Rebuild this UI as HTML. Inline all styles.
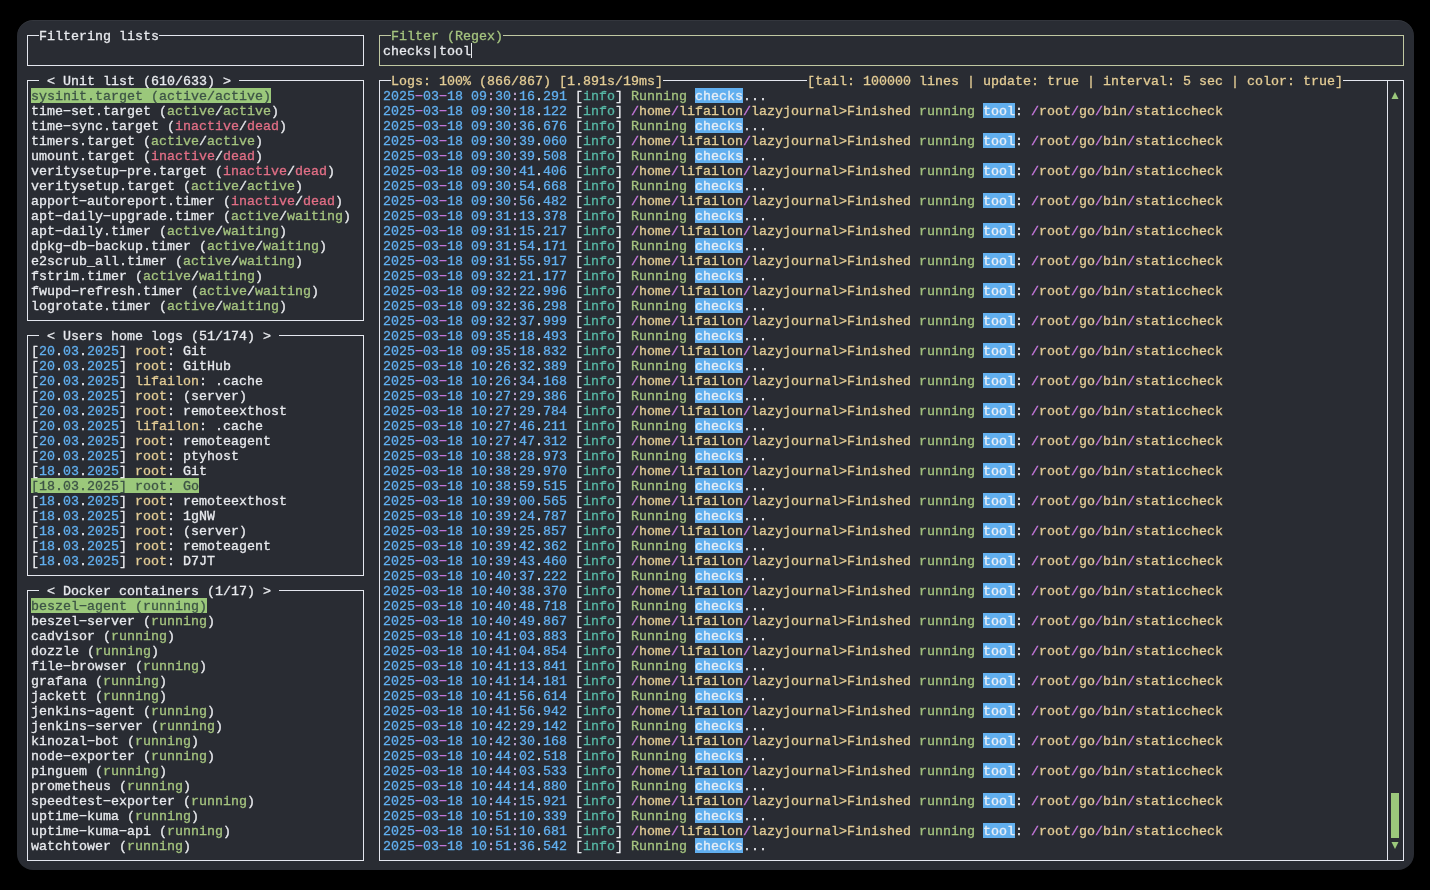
<!DOCTYPE html>
<html><head><meta charset="utf-8"><style>
html,body{margin:0;padding:0;background:#000000;width:1430px;height:890px;overflow:hidden}
.win{position:absolute;left:17px;top:20px;width:1397px;height:850px;border-radius:16px;background:#292c33;box-shadow:inset 0 1px 0 rgba(255,255,255,0.05)}
.l{position:absolute}
.fg{position:absolute;left:0;top:0;width:1430px;height:890px;will-change:transform}
.t{position:absolute;white-space:pre;font-family:"Liberation Mono",monospace;font-size:13.3333px;line-height:15px;height:15px;font-weight:normal;-webkit-text-stroke:0.3px currentColor}
</style></head><body>
<div class="win"></div>
<div class="l" style="left:27px;top:35px;width:337px;height:1px;background:#e4e7ef"></div>
<div class="l" style="left:27px;top:65px;width:337px;height:1px;background:#e4e7ef"></div>
<div class="l" style="left:27px;top:35px;width:1px;height:31px;background:#e4e7ef"></div>
<div class="l" style="left:363px;top:35px;width:1px;height:31px;background:#e4e7ef"></div>
<div class="l" style="left:39px;top:28px;width:120px;height:15px;background:#292c33"></div>
<div class="l" style="left:27px;top:80px;width:337px;height:1px;background:#e4e7ef"></div>
<div class="l" style="left:27px;top:320px;width:337px;height:1px;background:#e4e7ef"></div>
<div class="l" style="left:27px;top:80px;width:1px;height:241px;background:#e4e7ef"></div>
<div class="l" style="left:363px;top:80px;width:1px;height:241px;background:#e4e7ef"></div>
<div class="l" style="left:39px;top:73px;width:200px;height:15px;background:#292c33"></div>
<div class="l" style="left:31px;top:88px;width:240px;height:15px;background:#9bc87b"></div>
<div class="l" style="left:27px;top:335px;width:337px;height:1px;background:#e4e7ef"></div>
<div class="l" style="left:27px;top:575px;width:337px;height:1px;background:#e4e7ef"></div>
<div class="l" style="left:27px;top:335px;width:1px;height:241px;background:#e4e7ef"></div>
<div class="l" style="left:363px;top:335px;width:1px;height:241px;background:#e4e7ef"></div>
<div class="l" style="left:39px;top:328px;width:240px;height:15px;background:#292c33"></div>
<div class="l" style="left:31px;top:478px;width:168px;height:15px;background:#9bc87b"></div>
<div class="l" style="left:27px;top:590px;width:337px;height:1px;background:#e4e7ef"></div>
<div class="l" style="left:27px;top:860px;width:337px;height:1px;background:#e4e7ef"></div>
<div class="l" style="left:27px;top:590px;width:1px;height:271px;background:#e4e7ef"></div>
<div class="l" style="left:363px;top:590px;width:1px;height:271px;background:#e4e7ef"></div>
<div class="l" style="left:39px;top:583px;width:240px;height:15px;background:#292c33"></div>
<div class="l" style="left:31px;top:598px;width:176px;height:15px;background:#9bc87b"></div>
<div class="l" style="left:379px;top:35px;width:1025px;height:1px;background:#c0c8a2"></div>
<div class="l" style="left:379px;top:65px;width:1025px;height:1px;background:#c0c8a2"></div>
<div class="l" style="left:379px;top:35px;width:1px;height:31px;background:#c0c8a2"></div>
<div class="l" style="left:1403px;top:35px;width:1px;height:31px;background:#c0c8a2"></div>
<div class="l" style="left:391px;top:28px;width:112px;height:15px;background:#292c33"></div>
<div class="l" style="left:471px;top:43px;width:1px;height:15px;background:#e8eaee"></div>
<div class="l" style="left:379px;top:80px;width:1025px;height:1px;background:#e4e7ef"></div>
<div class="l" style="left:379px;top:860px;width:1025px;height:1px;background:#e4e7ef"></div>
<div class="l" style="left:379px;top:80px;width:1px;height:781px;background:#e4e7ef"></div>
<div class="l" style="left:1403px;top:80px;width:1px;height:781px;background:#e4e7ef"></div>
<div class="l" style="left:1387px;top:80px;width:1px;height:781px;background:#e4e7ef"></div>
<div class="l" style="left:391px;top:73px;width:272px;height:15px;background:#292c33"></div>
<div class="l" style="left:807px;top:73px;width:536px;height:15px;background:#292c33"></div>
<div class="l" style="left:695px;top:88px;width:48px;height:15px;background:#61afef"></div>
<div class="l" style="left:983px;top:103px;width:32px;height:15px;background:#61afef"></div>
<div class="l" style="left:695px;top:118px;width:48px;height:15px;background:#61afef"></div>
<div class="l" style="left:983px;top:133px;width:32px;height:15px;background:#61afef"></div>
<div class="l" style="left:695px;top:148px;width:48px;height:15px;background:#61afef"></div>
<div class="l" style="left:983px;top:163px;width:32px;height:15px;background:#61afef"></div>
<div class="l" style="left:695px;top:178px;width:48px;height:15px;background:#61afef"></div>
<div class="l" style="left:983px;top:193px;width:32px;height:15px;background:#61afef"></div>
<div class="l" style="left:695px;top:208px;width:48px;height:15px;background:#61afef"></div>
<div class="l" style="left:983px;top:223px;width:32px;height:15px;background:#61afef"></div>
<div class="l" style="left:695px;top:238px;width:48px;height:15px;background:#61afef"></div>
<div class="l" style="left:983px;top:253px;width:32px;height:15px;background:#61afef"></div>
<div class="l" style="left:695px;top:268px;width:48px;height:15px;background:#61afef"></div>
<div class="l" style="left:983px;top:283px;width:32px;height:15px;background:#61afef"></div>
<div class="l" style="left:695px;top:298px;width:48px;height:15px;background:#61afef"></div>
<div class="l" style="left:983px;top:313px;width:32px;height:15px;background:#61afef"></div>
<div class="l" style="left:695px;top:328px;width:48px;height:15px;background:#61afef"></div>
<div class="l" style="left:983px;top:343px;width:32px;height:15px;background:#61afef"></div>
<div class="l" style="left:695px;top:358px;width:48px;height:15px;background:#61afef"></div>
<div class="l" style="left:983px;top:373px;width:32px;height:15px;background:#61afef"></div>
<div class="l" style="left:695px;top:388px;width:48px;height:15px;background:#61afef"></div>
<div class="l" style="left:983px;top:403px;width:32px;height:15px;background:#61afef"></div>
<div class="l" style="left:695px;top:418px;width:48px;height:15px;background:#61afef"></div>
<div class="l" style="left:983px;top:433px;width:32px;height:15px;background:#61afef"></div>
<div class="l" style="left:695px;top:448px;width:48px;height:15px;background:#61afef"></div>
<div class="l" style="left:983px;top:463px;width:32px;height:15px;background:#61afef"></div>
<div class="l" style="left:695px;top:478px;width:48px;height:15px;background:#61afef"></div>
<div class="l" style="left:983px;top:493px;width:32px;height:15px;background:#61afef"></div>
<div class="l" style="left:695px;top:508px;width:48px;height:15px;background:#61afef"></div>
<div class="l" style="left:983px;top:523px;width:32px;height:15px;background:#61afef"></div>
<div class="l" style="left:695px;top:538px;width:48px;height:15px;background:#61afef"></div>
<div class="l" style="left:983px;top:553px;width:32px;height:15px;background:#61afef"></div>
<div class="l" style="left:695px;top:568px;width:48px;height:15px;background:#61afef"></div>
<div class="l" style="left:983px;top:583px;width:32px;height:15px;background:#61afef"></div>
<div class="l" style="left:695px;top:598px;width:48px;height:15px;background:#61afef"></div>
<div class="l" style="left:983px;top:613px;width:32px;height:15px;background:#61afef"></div>
<div class="l" style="left:695px;top:628px;width:48px;height:15px;background:#61afef"></div>
<div class="l" style="left:983px;top:643px;width:32px;height:15px;background:#61afef"></div>
<div class="l" style="left:695px;top:658px;width:48px;height:15px;background:#61afef"></div>
<div class="l" style="left:983px;top:673px;width:32px;height:15px;background:#61afef"></div>
<div class="l" style="left:695px;top:688px;width:48px;height:15px;background:#61afef"></div>
<div class="l" style="left:983px;top:703px;width:32px;height:15px;background:#61afef"></div>
<div class="l" style="left:695px;top:718px;width:48px;height:15px;background:#61afef"></div>
<div class="l" style="left:983px;top:733px;width:32px;height:15px;background:#61afef"></div>
<div class="l" style="left:695px;top:748px;width:48px;height:15px;background:#61afef"></div>
<div class="l" style="left:983px;top:763px;width:32px;height:15px;background:#61afef"></div>
<div class="l" style="left:695px;top:778px;width:48px;height:15px;background:#61afef"></div>
<div class="l" style="left:983px;top:793px;width:32px;height:15px;background:#61afef"></div>
<div class="l" style="left:695px;top:808px;width:48px;height:15px;background:#61afef"></div>
<div class="l" style="left:983px;top:823px;width:32px;height:15px;background:#61afef"></div>
<div class="l" style="left:695px;top:838px;width:48px;height:15px;background:#61afef"></div>
<svg class="l" style="left:1391px;top:88px" width="8" height="15"><polygon points="0.5,11 7.5,11 4,4" fill="#9bc87b"/></svg>
<svg class="l" style="left:1391px;top:838px" width="8" height="15"><polygon points="0.5,4 7.5,4 4,11" fill="#9bc87b"/></svg>
<div class="l" style="left:1391px;top:793px;width:8px;height:45px;background:#9bc87b"></div>
<div class="fg"><div class="t" style="left:39px;top:29px"><span style="color:#e8eaee">Filtering lists</span></div>
<div class="t" style="left:39px;top:74px"><span style="color:#e8eaee"> &lt; Unit list (610/633) &gt; </span></div>
<div class="t" style="left:31px;top:89px"><span style="color:#3d5446">sysinit.target (active/active)</span></div>
<div class="t" style="left:31px;top:104px"><span style="color:#e8eaee">time−set.target (</span><span style="color:#a5c47f">active</span><span style="color:#e8eaee">/</span><span style="color:#a5c47f">active</span><span style="color:#e8eaee">)</span></div>
<div class="t" style="left:31px;top:119px"><span style="color:#e8eaee">time−sync.target (</span><span style="color:#e26f86">inactive</span><span style="color:#e8eaee">/</span><span style="color:#e26f86">dead</span><span style="color:#e8eaee">)</span></div>
<div class="t" style="left:31px;top:134px"><span style="color:#e8eaee">timers.target (</span><span style="color:#a5c47f">active</span><span style="color:#e8eaee">/</span><span style="color:#a5c47f">active</span><span style="color:#e8eaee">)</span></div>
<div class="t" style="left:31px;top:149px"><span style="color:#e8eaee">umount.target (</span><span style="color:#e26f86">inactive</span><span style="color:#e8eaee">/</span><span style="color:#e26f86">dead</span><span style="color:#e8eaee">)</span></div>
<div class="t" style="left:31px;top:164px"><span style="color:#e8eaee">veritysetup−pre.target (</span><span style="color:#e26f86">inactive</span><span style="color:#e8eaee">/</span><span style="color:#e26f86">dead</span><span style="color:#e8eaee">)</span></div>
<div class="t" style="left:31px;top:179px"><span style="color:#e8eaee">veritysetup.target (</span><span style="color:#a5c47f">active</span><span style="color:#e8eaee">/</span><span style="color:#a5c47f">active</span><span style="color:#e8eaee">)</span></div>
<div class="t" style="left:31px;top:194px"><span style="color:#e8eaee">apport−autoreport.timer (</span><span style="color:#e26f86">inactive</span><span style="color:#e8eaee">/</span><span style="color:#e26f86">dead</span><span style="color:#e8eaee">)</span></div>
<div class="t" style="left:31px;top:209px"><span style="color:#e8eaee">apt−daily−upgrade.timer (</span><span style="color:#a5c47f">active</span><span style="color:#e8eaee">/</span><span style="color:#a5c47f">waiting</span><span style="color:#e8eaee">)</span></div>
<div class="t" style="left:31px;top:224px"><span style="color:#e8eaee">apt−daily.timer (</span><span style="color:#a5c47f">active</span><span style="color:#e8eaee">/</span><span style="color:#a5c47f">waiting</span><span style="color:#e8eaee">)</span></div>
<div class="t" style="left:31px;top:239px"><span style="color:#e8eaee">dpkg−db−backup.timer (</span><span style="color:#a5c47f">active</span><span style="color:#e8eaee">/</span><span style="color:#a5c47f">waiting</span><span style="color:#e8eaee">)</span></div>
<div class="t" style="left:31px;top:254px"><span style="color:#e8eaee">e2scrub_all.timer (</span><span style="color:#a5c47f">active</span><span style="color:#e8eaee">/</span><span style="color:#a5c47f">waiting</span><span style="color:#e8eaee">)</span></div>
<div class="t" style="left:31px;top:269px"><span style="color:#e8eaee">fstrim.timer (</span><span style="color:#a5c47f">active</span><span style="color:#e8eaee">/</span><span style="color:#a5c47f">waiting</span><span style="color:#e8eaee">)</span></div>
<div class="t" style="left:31px;top:284px"><span style="color:#e8eaee">fwupd−refresh.timer (</span><span style="color:#a5c47f">active</span><span style="color:#e8eaee">/</span><span style="color:#a5c47f">waiting</span><span style="color:#e8eaee">)</span></div>
<div class="t" style="left:31px;top:299px"><span style="color:#e8eaee">logrotate.timer (</span><span style="color:#a5c47f">active</span><span style="color:#e8eaee">/</span><span style="color:#a5c47f">waiting</span><span style="color:#e8eaee">)</span></div>
<div class="t" style="left:39px;top:329px"><span style="color:#e8eaee"> &lt; Users home logs (51/174) &gt; </span></div>
<div class="t" style="left:31px;top:344px"><span style="color:#e8eaee">[</span><span style="color:#61afef">20</span><span style="color:#e8eaee">.</span><span style="color:#61afef">03</span><span style="color:#e8eaee">.</span><span style="color:#61afef">2025</span><span style="color:#e8eaee">] </span><span style="color:#e3cc95">root</span><span style="color:#e8eaee">: Git</span></div>
<div class="t" style="left:31px;top:359px"><span style="color:#e8eaee">[</span><span style="color:#61afef">20</span><span style="color:#e8eaee">.</span><span style="color:#61afef">03</span><span style="color:#e8eaee">.</span><span style="color:#61afef">2025</span><span style="color:#e8eaee">] </span><span style="color:#e3cc95">root</span><span style="color:#e8eaee">: GitHub</span></div>
<div class="t" style="left:31px;top:374px"><span style="color:#e8eaee">[</span><span style="color:#61afef">20</span><span style="color:#e8eaee">.</span><span style="color:#61afef">03</span><span style="color:#e8eaee">.</span><span style="color:#61afef">2025</span><span style="color:#e8eaee">] </span><span style="color:#e3cc95">lifailon</span><span style="color:#e8eaee">: .cache</span></div>
<div class="t" style="left:31px;top:389px"><span style="color:#e8eaee">[</span><span style="color:#61afef">20</span><span style="color:#e8eaee">.</span><span style="color:#61afef">03</span><span style="color:#e8eaee">.</span><span style="color:#61afef">2025</span><span style="color:#e8eaee">] </span><span style="color:#e3cc95">root</span><span style="color:#e8eaee">: (server)</span></div>
<div class="t" style="left:31px;top:404px"><span style="color:#e8eaee">[</span><span style="color:#61afef">20</span><span style="color:#e8eaee">.</span><span style="color:#61afef">03</span><span style="color:#e8eaee">.</span><span style="color:#61afef">2025</span><span style="color:#e8eaee">] </span><span style="color:#e3cc95">root</span><span style="color:#e8eaee">: remoteexthost</span></div>
<div class="t" style="left:31px;top:419px"><span style="color:#e8eaee">[</span><span style="color:#61afef">20</span><span style="color:#e8eaee">.</span><span style="color:#61afef">03</span><span style="color:#e8eaee">.</span><span style="color:#61afef">2025</span><span style="color:#e8eaee">] </span><span style="color:#e3cc95">lifailon</span><span style="color:#e8eaee">: .cache</span></div>
<div class="t" style="left:31px;top:434px"><span style="color:#e8eaee">[</span><span style="color:#61afef">20</span><span style="color:#e8eaee">.</span><span style="color:#61afef">03</span><span style="color:#e8eaee">.</span><span style="color:#61afef">2025</span><span style="color:#e8eaee">] </span><span style="color:#e3cc95">root</span><span style="color:#e8eaee">: remoteagent</span></div>
<div class="t" style="left:31px;top:449px"><span style="color:#e8eaee">[</span><span style="color:#61afef">20</span><span style="color:#e8eaee">.</span><span style="color:#61afef">03</span><span style="color:#e8eaee">.</span><span style="color:#61afef">2025</span><span style="color:#e8eaee">] </span><span style="color:#e3cc95">root</span><span style="color:#e8eaee">: ptyhost</span></div>
<div class="t" style="left:31px;top:464px"><span style="color:#e8eaee">[</span><span style="color:#61afef">18</span><span style="color:#e8eaee">.</span><span style="color:#61afef">03</span><span style="color:#e8eaee">.</span><span style="color:#61afef">2025</span><span style="color:#e8eaee">] </span><span style="color:#e3cc95">root</span><span style="color:#e8eaee">: Git</span></div>
<div class="t" style="left:31px;top:479px"><span style="color:#3d5446">[18.03.2025] root: Go</span></div>
<div class="t" style="left:31px;top:494px"><span style="color:#e8eaee">[</span><span style="color:#61afef">18</span><span style="color:#e8eaee">.</span><span style="color:#61afef">03</span><span style="color:#e8eaee">.</span><span style="color:#61afef">2025</span><span style="color:#e8eaee">] </span><span style="color:#e3cc95">root</span><span style="color:#e8eaee">: remoteexthost</span></div>
<div class="t" style="left:31px;top:509px"><span style="color:#e8eaee">[</span><span style="color:#61afef">18</span><span style="color:#e8eaee">.</span><span style="color:#61afef">03</span><span style="color:#e8eaee">.</span><span style="color:#61afef">2025</span><span style="color:#e8eaee">] </span><span style="color:#e3cc95">root</span><span style="color:#e8eaee">: 1gNW</span></div>
<div class="t" style="left:31px;top:524px"><span style="color:#e8eaee">[</span><span style="color:#61afef">18</span><span style="color:#e8eaee">.</span><span style="color:#61afef">03</span><span style="color:#e8eaee">.</span><span style="color:#61afef">2025</span><span style="color:#e8eaee">] </span><span style="color:#e3cc95">root</span><span style="color:#e8eaee">: (server)</span></div>
<div class="t" style="left:31px;top:539px"><span style="color:#e8eaee">[</span><span style="color:#61afef">18</span><span style="color:#e8eaee">.</span><span style="color:#61afef">03</span><span style="color:#e8eaee">.</span><span style="color:#61afef">2025</span><span style="color:#e8eaee">] </span><span style="color:#e3cc95">root</span><span style="color:#e8eaee">: remoteagent</span></div>
<div class="t" style="left:31px;top:554px"><span style="color:#e8eaee">[</span><span style="color:#61afef">18</span><span style="color:#e8eaee">.</span><span style="color:#61afef">03</span><span style="color:#e8eaee">.</span><span style="color:#61afef">2025</span><span style="color:#e8eaee">] </span><span style="color:#e3cc95">root</span><span style="color:#e8eaee">: D7JT</span></div>
<div class="t" style="left:39px;top:584px"><span style="color:#e8eaee"> &lt; Docker containers (1/17) &gt; </span></div>
<div class="t" style="left:31px;top:599px"><span style="color:#3d5446">beszel−agent (running)</span></div>
<div class="t" style="left:31px;top:614px"><span style="color:#e8eaee">beszel−server (</span><span style="color:#a5c47f">running</span><span style="color:#e8eaee">)</span></div>
<div class="t" style="left:31px;top:629px"><span style="color:#e8eaee">cadvisor (</span><span style="color:#a5c47f">running</span><span style="color:#e8eaee">)</span></div>
<div class="t" style="left:31px;top:644px"><span style="color:#e8eaee">dozzle (</span><span style="color:#a5c47f">running</span><span style="color:#e8eaee">)</span></div>
<div class="t" style="left:31px;top:659px"><span style="color:#e8eaee">file−browser (</span><span style="color:#a5c47f">running</span><span style="color:#e8eaee">)</span></div>
<div class="t" style="left:31px;top:674px"><span style="color:#e8eaee">grafana (</span><span style="color:#a5c47f">running</span><span style="color:#e8eaee">)</span></div>
<div class="t" style="left:31px;top:689px"><span style="color:#e8eaee">jackett (</span><span style="color:#a5c47f">running</span><span style="color:#e8eaee">)</span></div>
<div class="t" style="left:31px;top:704px"><span style="color:#e8eaee">jenkins−agent (</span><span style="color:#a5c47f">running</span><span style="color:#e8eaee">)</span></div>
<div class="t" style="left:31px;top:719px"><span style="color:#e8eaee">jenkins−server (</span><span style="color:#a5c47f">running</span><span style="color:#e8eaee">)</span></div>
<div class="t" style="left:31px;top:734px"><span style="color:#e8eaee">kinozal−bot (</span><span style="color:#a5c47f">running</span><span style="color:#e8eaee">)</span></div>
<div class="t" style="left:31px;top:749px"><span style="color:#e8eaee">node−exporter (</span><span style="color:#a5c47f">running</span><span style="color:#e8eaee">)</span></div>
<div class="t" style="left:31px;top:764px"><span style="color:#e8eaee">pinguem (</span><span style="color:#a5c47f">running</span><span style="color:#e8eaee">)</span></div>
<div class="t" style="left:31px;top:779px"><span style="color:#e8eaee">prometheus (</span><span style="color:#a5c47f">running</span><span style="color:#e8eaee">)</span></div>
<div class="t" style="left:31px;top:794px"><span style="color:#e8eaee">speedtest−exporter (</span><span style="color:#a5c47f">running</span><span style="color:#e8eaee">)</span></div>
<div class="t" style="left:31px;top:809px"><span style="color:#e8eaee">uptime−kuma (</span><span style="color:#a5c47f">running</span><span style="color:#e8eaee">)</span></div>
<div class="t" style="left:31px;top:824px"><span style="color:#e8eaee">uptime−kuma−api (</span><span style="color:#a5c47f">running</span><span style="color:#e8eaee">)</span></div>
<div class="t" style="left:31px;top:839px"><span style="color:#e8eaee">watchtower (</span><span style="color:#a5c47f">running</span><span style="color:#e8eaee">)</span></div>
<div class="t" style="left:391px;top:29px"><span style="color:#a5c47f">Filter (Regex)</span></div>
<div class="t" style="left:383px;top:44px"><span style="color:#e8eaee">checks|tool</span></div>
<div class="t" style="left:391px;top:74px"><span style="color:#e3cc95">Logs: 100% (866/867) [1.891s/19ms]</span></div>
<div class="t" style="left:807px;top:74px"><span style="color:#e3cc95">[tail: 100000 lines | update: true | interval: 5 sec | color: true]</span></div>
<div class="t" style="left:383px;top:89px"><span style="color:#61afef">2025</span><span style="color:#c678dd">−</span><span style="color:#61afef">03</span><span style="color:#c678dd">−</span><span style="color:#61afef">18</span><span style="color:#e8eaee"> </span><span style="color:#61afef">09</span><span style="color:#c9a9d6">:</span><span style="color:#61afef">30</span><span style="color:#c9a9d6">:</span><span style="color:#61afef">16</span><span style="color:#e8eaee">.</span><span style="color:#61afef">291</span><span style="color:#e8eaee"> [</span><span style="color:#56b8a6">info</span><span style="color:#e8eaee">] </span><span style="color:#a5c47f">Running</span><span style="color:#e8eaee"> </span><span style="color:#e8eef6">checks</span><span style="color:#e8eaee">...</span></div>
<div class="t" style="left:383px;top:104px"><span style="color:#61afef">2025</span><span style="color:#c678dd">−</span><span style="color:#61afef">03</span><span style="color:#c678dd">−</span><span style="color:#61afef">18</span><span style="color:#e8eaee"> </span><span style="color:#61afef">09</span><span style="color:#c9a9d6">:</span><span style="color:#61afef">30</span><span style="color:#c9a9d6">:</span><span style="color:#61afef">18</span><span style="color:#e8eaee">.</span><span style="color:#61afef">122</span><span style="color:#e8eaee"> [</span><span style="color:#56b8a6">info</span><span style="color:#e8eaee">] </span><span style="color:#c678dd">/</span><span style="color:#e3cc95">home</span><span style="color:#c678dd">/</span><span style="color:#e3cc95">lifailon</span><span style="color:#c678dd">/</span><span style="color:#e3cc95">lazyjournal&gt;Finished</span><span style="color:#e8eaee"> </span><span style="color:#a5c47f">running</span><span style="color:#e8eaee"> </span><span style="color:#e8eef6">tool</span><span style="color:#e8eaee">: </span><span style="color:#c678dd">/</span><span style="color:#e3cc95">root</span><span style="color:#c678dd">/</span><span style="color:#e3cc95">go</span><span style="color:#c678dd">/</span><span style="color:#e3cc95">bin</span><span style="color:#c678dd">/</span><span style="color:#e3cc95">staticcheck</span></div>
<div class="t" style="left:383px;top:119px"><span style="color:#61afef">2025</span><span style="color:#c678dd">−</span><span style="color:#61afef">03</span><span style="color:#c678dd">−</span><span style="color:#61afef">18</span><span style="color:#e8eaee"> </span><span style="color:#61afef">09</span><span style="color:#c9a9d6">:</span><span style="color:#61afef">30</span><span style="color:#c9a9d6">:</span><span style="color:#61afef">36</span><span style="color:#e8eaee">.</span><span style="color:#61afef">676</span><span style="color:#e8eaee"> [</span><span style="color:#56b8a6">info</span><span style="color:#e8eaee">] </span><span style="color:#a5c47f">Running</span><span style="color:#e8eaee"> </span><span style="color:#e8eef6">checks</span><span style="color:#e8eaee">...</span></div>
<div class="t" style="left:383px;top:134px"><span style="color:#61afef">2025</span><span style="color:#c678dd">−</span><span style="color:#61afef">03</span><span style="color:#c678dd">−</span><span style="color:#61afef">18</span><span style="color:#e8eaee"> </span><span style="color:#61afef">09</span><span style="color:#c9a9d6">:</span><span style="color:#61afef">30</span><span style="color:#c9a9d6">:</span><span style="color:#61afef">39</span><span style="color:#e8eaee">.</span><span style="color:#61afef">060</span><span style="color:#e8eaee"> [</span><span style="color:#56b8a6">info</span><span style="color:#e8eaee">] </span><span style="color:#c678dd">/</span><span style="color:#e3cc95">home</span><span style="color:#c678dd">/</span><span style="color:#e3cc95">lifailon</span><span style="color:#c678dd">/</span><span style="color:#e3cc95">lazyjournal&gt;Finished</span><span style="color:#e8eaee"> </span><span style="color:#a5c47f">running</span><span style="color:#e8eaee"> </span><span style="color:#e8eef6">tool</span><span style="color:#e8eaee">: </span><span style="color:#c678dd">/</span><span style="color:#e3cc95">root</span><span style="color:#c678dd">/</span><span style="color:#e3cc95">go</span><span style="color:#c678dd">/</span><span style="color:#e3cc95">bin</span><span style="color:#c678dd">/</span><span style="color:#e3cc95">staticcheck</span></div>
<div class="t" style="left:383px;top:149px"><span style="color:#61afef">2025</span><span style="color:#c678dd">−</span><span style="color:#61afef">03</span><span style="color:#c678dd">−</span><span style="color:#61afef">18</span><span style="color:#e8eaee"> </span><span style="color:#61afef">09</span><span style="color:#c9a9d6">:</span><span style="color:#61afef">30</span><span style="color:#c9a9d6">:</span><span style="color:#61afef">39</span><span style="color:#e8eaee">.</span><span style="color:#61afef">508</span><span style="color:#e8eaee"> [</span><span style="color:#56b8a6">info</span><span style="color:#e8eaee">] </span><span style="color:#a5c47f">Running</span><span style="color:#e8eaee"> </span><span style="color:#e8eef6">checks</span><span style="color:#e8eaee">...</span></div>
<div class="t" style="left:383px;top:164px"><span style="color:#61afef">2025</span><span style="color:#c678dd">−</span><span style="color:#61afef">03</span><span style="color:#c678dd">−</span><span style="color:#61afef">18</span><span style="color:#e8eaee"> </span><span style="color:#61afef">09</span><span style="color:#c9a9d6">:</span><span style="color:#61afef">30</span><span style="color:#c9a9d6">:</span><span style="color:#61afef">41</span><span style="color:#e8eaee">.</span><span style="color:#61afef">406</span><span style="color:#e8eaee"> [</span><span style="color:#56b8a6">info</span><span style="color:#e8eaee">] </span><span style="color:#c678dd">/</span><span style="color:#e3cc95">home</span><span style="color:#c678dd">/</span><span style="color:#e3cc95">lifailon</span><span style="color:#c678dd">/</span><span style="color:#e3cc95">lazyjournal&gt;Finished</span><span style="color:#e8eaee"> </span><span style="color:#a5c47f">running</span><span style="color:#e8eaee"> </span><span style="color:#e8eef6">tool</span><span style="color:#e8eaee">: </span><span style="color:#c678dd">/</span><span style="color:#e3cc95">root</span><span style="color:#c678dd">/</span><span style="color:#e3cc95">go</span><span style="color:#c678dd">/</span><span style="color:#e3cc95">bin</span><span style="color:#c678dd">/</span><span style="color:#e3cc95">staticcheck</span></div>
<div class="t" style="left:383px;top:179px"><span style="color:#61afef">2025</span><span style="color:#c678dd">−</span><span style="color:#61afef">03</span><span style="color:#c678dd">−</span><span style="color:#61afef">18</span><span style="color:#e8eaee"> </span><span style="color:#61afef">09</span><span style="color:#c9a9d6">:</span><span style="color:#61afef">30</span><span style="color:#c9a9d6">:</span><span style="color:#61afef">54</span><span style="color:#e8eaee">.</span><span style="color:#61afef">668</span><span style="color:#e8eaee"> [</span><span style="color:#56b8a6">info</span><span style="color:#e8eaee">] </span><span style="color:#a5c47f">Running</span><span style="color:#e8eaee"> </span><span style="color:#e8eef6">checks</span><span style="color:#e8eaee">...</span></div>
<div class="t" style="left:383px;top:194px"><span style="color:#61afef">2025</span><span style="color:#c678dd">−</span><span style="color:#61afef">03</span><span style="color:#c678dd">−</span><span style="color:#61afef">18</span><span style="color:#e8eaee"> </span><span style="color:#61afef">09</span><span style="color:#c9a9d6">:</span><span style="color:#61afef">30</span><span style="color:#c9a9d6">:</span><span style="color:#61afef">56</span><span style="color:#e8eaee">.</span><span style="color:#61afef">482</span><span style="color:#e8eaee"> [</span><span style="color:#56b8a6">info</span><span style="color:#e8eaee">] </span><span style="color:#c678dd">/</span><span style="color:#e3cc95">home</span><span style="color:#c678dd">/</span><span style="color:#e3cc95">lifailon</span><span style="color:#c678dd">/</span><span style="color:#e3cc95">lazyjournal&gt;Finished</span><span style="color:#e8eaee"> </span><span style="color:#a5c47f">running</span><span style="color:#e8eaee"> </span><span style="color:#e8eef6">tool</span><span style="color:#e8eaee">: </span><span style="color:#c678dd">/</span><span style="color:#e3cc95">root</span><span style="color:#c678dd">/</span><span style="color:#e3cc95">go</span><span style="color:#c678dd">/</span><span style="color:#e3cc95">bin</span><span style="color:#c678dd">/</span><span style="color:#e3cc95">staticcheck</span></div>
<div class="t" style="left:383px;top:209px"><span style="color:#61afef">2025</span><span style="color:#c678dd">−</span><span style="color:#61afef">03</span><span style="color:#c678dd">−</span><span style="color:#61afef">18</span><span style="color:#e8eaee"> </span><span style="color:#61afef">09</span><span style="color:#c9a9d6">:</span><span style="color:#61afef">31</span><span style="color:#c9a9d6">:</span><span style="color:#61afef">13</span><span style="color:#e8eaee">.</span><span style="color:#61afef">378</span><span style="color:#e8eaee"> [</span><span style="color:#56b8a6">info</span><span style="color:#e8eaee">] </span><span style="color:#a5c47f">Running</span><span style="color:#e8eaee"> </span><span style="color:#e8eef6">checks</span><span style="color:#e8eaee">...</span></div>
<div class="t" style="left:383px;top:224px"><span style="color:#61afef">2025</span><span style="color:#c678dd">−</span><span style="color:#61afef">03</span><span style="color:#c678dd">−</span><span style="color:#61afef">18</span><span style="color:#e8eaee"> </span><span style="color:#61afef">09</span><span style="color:#c9a9d6">:</span><span style="color:#61afef">31</span><span style="color:#c9a9d6">:</span><span style="color:#61afef">15</span><span style="color:#e8eaee">.</span><span style="color:#61afef">217</span><span style="color:#e8eaee"> [</span><span style="color:#56b8a6">info</span><span style="color:#e8eaee">] </span><span style="color:#c678dd">/</span><span style="color:#e3cc95">home</span><span style="color:#c678dd">/</span><span style="color:#e3cc95">lifailon</span><span style="color:#c678dd">/</span><span style="color:#e3cc95">lazyjournal&gt;Finished</span><span style="color:#e8eaee"> </span><span style="color:#a5c47f">running</span><span style="color:#e8eaee"> </span><span style="color:#e8eef6">tool</span><span style="color:#e8eaee">: </span><span style="color:#c678dd">/</span><span style="color:#e3cc95">root</span><span style="color:#c678dd">/</span><span style="color:#e3cc95">go</span><span style="color:#c678dd">/</span><span style="color:#e3cc95">bin</span><span style="color:#c678dd">/</span><span style="color:#e3cc95">staticcheck</span></div>
<div class="t" style="left:383px;top:239px"><span style="color:#61afef">2025</span><span style="color:#c678dd">−</span><span style="color:#61afef">03</span><span style="color:#c678dd">−</span><span style="color:#61afef">18</span><span style="color:#e8eaee"> </span><span style="color:#61afef">09</span><span style="color:#c9a9d6">:</span><span style="color:#61afef">31</span><span style="color:#c9a9d6">:</span><span style="color:#61afef">54</span><span style="color:#e8eaee">.</span><span style="color:#61afef">171</span><span style="color:#e8eaee"> [</span><span style="color:#56b8a6">info</span><span style="color:#e8eaee">] </span><span style="color:#a5c47f">Running</span><span style="color:#e8eaee"> </span><span style="color:#e8eef6">checks</span><span style="color:#e8eaee">...</span></div>
<div class="t" style="left:383px;top:254px"><span style="color:#61afef">2025</span><span style="color:#c678dd">−</span><span style="color:#61afef">03</span><span style="color:#c678dd">−</span><span style="color:#61afef">18</span><span style="color:#e8eaee"> </span><span style="color:#61afef">09</span><span style="color:#c9a9d6">:</span><span style="color:#61afef">31</span><span style="color:#c9a9d6">:</span><span style="color:#61afef">55</span><span style="color:#e8eaee">.</span><span style="color:#61afef">917</span><span style="color:#e8eaee"> [</span><span style="color:#56b8a6">info</span><span style="color:#e8eaee">] </span><span style="color:#c678dd">/</span><span style="color:#e3cc95">home</span><span style="color:#c678dd">/</span><span style="color:#e3cc95">lifailon</span><span style="color:#c678dd">/</span><span style="color:#e3cc95">lazyjournal&gt;Finished</span><span style="color:#e8eaee"> </span><span style="color:#a5c47f">running</span><span style="color:#e8eaee"> </span><span style="color:#e8eef6">tool</span><span style="color:#e8eaee">: </span><span style="color:#c678dd">/</span><span style="color:#e3cc95">root</span><span style="color:#c678dd">/</span><span style="color:#e3cc95">go</span><span style="color:#c678dd">/</span><span style="color:#e3cc95">bin</span><span style="color:#c678dd">/</span><span style="color:#e3cc95">staticcheck</span></div>
<div class="t" style="left:383px;top:269px"><span style="color:#61afef">2025</span><span style="color:#c678dd">−</span><span style="color:#61afef">03</span><span style="color:#c678dd">−</span><span style="color:#61afef">18</span><span style="color:#e8eaee"> </span><span style="color:#61afef">09</span><span style="color:#c9a9d6">:</span><span style="color:#61afef">32</span><span style="color:#c9a9d6">:</span><span style="color:#61afef">21</span><span style="color:#e8eaee">.</span><span style="color:#61afef">177</span><span style="color:#e8eaee"> [</span><span style="color:#56b8a6">info</span><span style="color:#e8eaee">] </span><span style="color:#a5c47f">Running</span><span style="color:#e8eaee"> </span><span style="color:#e8eef6">checks</span><span style="color:#e8eaee">...</span></div>
<div class="t" style="left:383px;top:284px"><span style="color:#61afef">2025</span><span style="color:#c678dd">−</span><span style="color:#61afef">03</span><span style="color:#c678dd">−</span><span style="color:#61afef">18</span><span style="color:#e8eaee"> </span><span style="color:#61afef">09</span><span style="color:#c9a9d6">:</span><span style="color:#61afef">32</span><span style="color:#c9a9d6">:</span><span style="color:#61afef">22</span><span style="color:#e8eaee">.</span><span style="color:#61afef">996</span><span style="color:#e8eaee"> [</span><span style="color:#56b8a6">info</span><span style="color:#e8eaee">] </span><span style="color:#c678dd">/</span><span style="color:#e3cc95">home</span><span style="color:#c678dd">/</span><span style="color:#e3cc95">lifailon</span><span style="color:#c678dd">/</span><span style="color:#e3cc95">lazyjournal&gt;Finished</span><span style="color:#e8eaee"> </span><span style="color:#a5c47f">running</span><span style="color:#e8eaee"> </span><span style="color:#e8eef6">tool</span><span style="color:#e8eaee">: </span><span style="color:#c678dd">/</span><span style="color:#e3cc95">root</span><span style="color:#c678dd">/</span><span style="color:#e3cc95">go</span><span style="color:#c678dd">/</span><span style="color:#e3cc95">bin</span><span style="color:#c678dd">/</span><span style="color:#e3cc95">staticcheck</span></div>
<div class="t" style="left:383px;top:299px"><span style="color:#61afef">2025</span><span style="color:#c678dd">−</span><span style="color:#61afef">03</span><span style="color:#c678dd">−</span><span style="color:#61afef">18</span><span style="color:#e8eaee"> </span><span style="color:#61afef">09</span><span style="color:#c9a9d6">:</span><span style="color:#61afef">32</span><span style="color:#c9a9d6">:</span><span style="color:#61afef">36</span><span style="color:#e8eaee">.</span><span style="color:#61afef">298</span><span style="color:#e8eaee"> [</span><span style="color:#56b8a6">info</span><span style="color:#e8eaee">] </span><span style="color:#a5c47f">Running</span><span style="color:#e8eaee"> </span><span style="color:#e8eef6">checks</span><span style="color:#e8eaee">...</span></div>
<div class="t" style="left:383px;top:314px"><span style="color:#61afef">2025</span><span style="color:#c678dd">−</span><span style="color:#61afef">03</span><span style="color:#c678dd">−</span><span style="color:#61afef">18</span><span style="color:#e8eaee"> </span><span style="color:#61afef">09</span><span style="color:#c9a9d6">:</span><span style="color:#61afef">32</span><span style="color:#c9a9d6">:</span><span style="color:#61afef">37</span><span style="color:#e8eaee">.</span><span style="color:#61afef">999</span><span style="color:#e8eaee"> [</span><span style="color:#56b8a6">info</span><span style="color:#e8eaee">] </span><span style="color:#c678dd">/</span><span style="color:#e3cc95">home</span><span style="color:#c678dd">/</span><span style="color:#e3cc95">lifailon</span><span style="color:#c678dd">/</span><span style="color:#e3cc95">lazyjournal&gt;Finished</span><span style="color:#e8eaee"> </span><span style="color:#a5c47f">running</span><span style="color:#e8eaee"> </span><span style="color:#e8eef6">tool</span><span style="color:#e8eaee">: </span><span style="color:#c678dd">/</span><span style="color:#e3cc95">root</span><span style="color:#c678dd">/</span><span style="color:#e3cc95">go</span><span style="color:#c678dd">/</span><span style="color:#e3cc95">bin</span><span style="color:#c678dd">/</span><span style="color:#e3cc95">staticcheck</span></div>
<div class="t" style="left:383px;top:329px"><span style="color:#61afef">2025</span><span style="color:#c678dd">−</span><span style="color:#61afef">03</span><span style="color:#c678dd">−</span><span style="color:#61afef">18</span><span style="color:#e8eaee"> </span><span style="color:#61afef">09</span><span style="color:#c9a9d6">:</span><span style="color:#61afef">35</span><span style="color:#c9a9d6">:</span><span style="color:#61afef">18</span><span style="color:#e8eaee">.</span><span style="color:#61afef">493</span><span style="color:#e8eaee"> [</span><span style="color:#56b8a6">info</span><span style="color:#e8eaee">] </span><span style="color:#a5c47f">Running</span><span style="color:#e8eaee"> </span><span style="color:#e8eef6">checks</span><span style="color:#e8eaee">...</span></div>
<div class="t" style="left:383px;top:344px"><span style="color:#61afef">2025</span><span style="color:#c678dd">−</span><span style="color:#61afef">03</span><span style="color:#c678dd">−</span><span style="color:#61afef">18</span><span style="color:#e8eaee"> </span><span style="color:#61afef">09</span><span style="color:#c9a9d6">:</span><span style="color:#61afef">35</span><span style="color:#c9a9d6">:</span><span style="color:#61afef">18</span><span style="color:#e8eaee">.</span><span style="color:#61afef">832</span><span style="color:#e8eaee"> [</span><span style="color:#56b8a6">info</span><span style="color:#e8eaee">] </span><span style="color:#c678dd">/</span><span style="color:#e3cc95">home</span><span style="color:#c678dd">/</span><span style="color:#e3cc95">lifailon</span><span style="color:#c678dd">/</span><span style="color:#e3cc95">lazyjournal&gt;Finished</span><span style="color:#e8eaee"> </span><span style="color:#a5c47f">running</span><span style="color:#e8eaee"> </span><span style="color:#e8eef6">tool</span><span style="color:#e8eaee">: </span><span style="color:#c678dd">/</span><span style="color:#e3cc95">root</span><span style="color:#c678dd">/</span><span style="color:#e3cc95">go</span><span style="color:#c678dd">/</span><span style="color:#e3cc95">bin</span><span style="color:#c678dd">/</span><span style="color:#e3cc95">staticcheck</span></div>
<div class="t" style="left:383px;top:359px"><span style="color:#61afef">2025</span><span style="color:#c678dd">−</span><span style="color:#61afef">03</span><span style="color:#c678dd">−</span><span style="color:#61afef">18</span><span style="color:#e8eaee"> </span><span style="color:#61afef">10</span><span style="color:#c9a9d6">:</span><span style="color:#61afef">26</span><span style="color:#c9a9d6">:</span><span style="color:#61afef">32</span><span style="color:#e8eaee">.</span><span style="color:#61afef">389</span><span style="color:#e8eaee"> [</span><span style="color:#56b8a6">info</span><span style="color:#e8eaee">] </span><span style="color:#a5c47f">Running</span><span style="color:#e8eaee"> </span><span style="color:#e8eef6">checks</span><span style="color:#e8eaee">...</span></div>
<div class="t" style="left:383px;top:374px"><span style="color:#61afef">2025</span><span style="color:#c678dd">−</span><span style="color:#61afef">03</span><span style="color:#c678dd">−</span><span style="color:#61afef">18</span><span style="color:#e8eaee"> </span><span style="color:#61afef">10</span><span style="color:#c9a9d6">:</span><span style="color:#61afef">26</span><span style="color:#c9a9d6">:</span><span style="color:#61afef">34</span><span style="color:#e8eaee">.</span><span style="color:#61afef">168</span><span style="color:#e8eaee"> [</span><span style="color:#56b8a6">info</span><span style="color:#e8eaee">] </span><span style="color:#c678dd">/</span><span style="color:#e3cc95">home</span><span style="color:#c678dd">/</span><span style="color:#e3cc95">lifailon</span><span style="color:#c678dd">/</span><span style="color:#e3cc95">lazyjournal&gt;Finished</span><span style="color:#e8eaee"> </span><span style="color:#a5c47f">running</span><span style="color:#e8eaee"> </span><span style="color:#e8eef6">tool</span><span style="color:#e8eaee">: </span><span style="color:#c678dd">/</span><span style="color:#e3cc95">root</span><span style="color:#c678dd">/</span><span style="color:#e3cc95">go</span><span style="color:#c678dd">/</span><span style="color:#e3cc95">bin</span><span style="color:#c678dd">/</span><span style="color:#e3cc95">staticcheck</span></div>
<div class="t" style="left:383px;top:389px"><span style="color:#61afef">2025</span><span style="color:#c678dd">−</span><span style="color:#61afef">03</span><span style="color:#c678dd">−</span><span style="color:#61afef">18</span><span style="color:#e8eaee"> </span><span style="color:#61afef">10</span><span style="color:#c9a9d6">:</span><span style="color:#61afef">27</span><span style="color:#c9a9d6">:</span><span style="color:#61afef">29</span><span style="color:#e8eaee">.</span><span style="color:#61afef">386</span><span style="color:#e8eaee"> [</span><span style="color:#56b8a6">info</span><span style="color:#e8eaee">] </span><span style="color:#a5c47f">Running</span><span style="color:#e8eaee"> </span><span style="color:#e8eef6">checks</span><span style="color:#e8eaee">...</span></div>
<div class="t" style="left:383px;top:404px"><span style="color:#61afef">2025</span><span style="color:#c678dd">−</span><span style="color:#61afef">03</span><span style="color:#c678dd">−</span><span style="color:#61afef">18</span><span style="color:#e8eaee"> </span><span style="color:#61afef">10</span><span style="color:#c9a9d6">:</span><span style="color:#61afef">27</span><span style="color:#c9a9d6">:</span><span style="color:#61afef">29</span><span style="color:#e8eaee">.</span><span style="color:#61afef">784</span><span style="color:#e8eaee"> [</span><span style="color:#56b8a6">info</span><span style="color:#e8eaee">] </span><span style="color:#c678dd">/</span><span style="color:#e3cc95">home</span><span style="color:#c678dd">/</span><span style="color:#e3cc95">lifailon</span><span style="color:#c678dd">/</span><span style="color:#e3cc95">lazyjournal&gt;Finished</span><span style="color:#e8eaee"> </span><span style="color:#a5c47f">running</span><span style="color:#e8eaee"> </span><span style="color:#e8eef6">tool</span><span style="color:#e8eaee">: </span><span style="color:#c678dd">/</span><span style="color:#e3cc95">root</span><span style="color:#c678dd">/</span><span style="color:#e3cc95">go</span><span style="color:#c678dd">/</span><span style="color:#e3cc95">bin</span><span style="color:#c678dd">/</span><span style="color:#e3cc95">staticcheck</span></div>
<div class="t" style="left:383px;top:419px"><span style="color:#61afef">2025</span><span style="color:#c678dd">−</span><span style="color:#61afef">03</span><span style="color:#c678dd">−</span><span style="color:#61afef">18</span><span style="color:#e8eaee"> </span><span style="color:#61afef">10</span><span style="color:#c9a9d6">:</span><span style="color:#61afef">27</span><span style="color:#c9a9d6">:</span><span style="color:#61afef">46</span><span style="color:#e8eaee">.</span><span style="color:#61afef">211</span><span style="color:#e8eaee"> [</span><span style="color:#56b8a6">info</span><span style="color:#e8eaee">] </span><span style="color:#a5c47f">Running</span><span style="color:#e8eaee"> </span><span style="color:#e8eef6">checks</span><span style="color:#e8eaee">...</span></div>
<div class="t" style="left:383px;top:434px"><span style="color:#61afef">2025</span><span style="color:#c678dd">−</span><span style="color:#61afef">03</span><span style="color:#c678dd">−</span><span style="color:#61afef">18</span><span style="color:#e8eaee"> </span><span style="color:#61afef">10</span><span style="color:#c9a9d6">:</span><span style="color:#61afef">27</span><span style="color:#c9a9d6">:</span><span style="color:#61afef">47</span><span style="color:#e8eaee">.</span><span style="color:#61afef">312</span><span style="color:#e8eaee"> [</span><span style="color:#56b8a6">info</span><span style="color:#e8eaee">] </span><span style="color:#c678dd">/</span><span style="color:#e3cc95">home</span><span style="color:#c678dd">/</span><span style="color:#e3cc95">lifailon</span><span style="color:#c678dd">/</span><span style="color:#e3cc95">lazyjournal&gt;Finished</span><span style="color:#e8eaee"> </span><span style="color:#a5c47f">running</span><span style="color:#e8eaee"> </span><span style="color:#e8eef6">tool</span><span style="color:#e8eaee">: </span><span style="color:#c678dd">/</span><span style="color:#e3cc95">root</span><span style="color:#c678dd">/</span><span style="color:#e3cc95">go</span><span style="color:#c678dd">/</span><span style="color:#e3cc95">bin</span><span style="color:#c678dd">/</span><span style="color:#e3cc95">staticcheck</span></div>
<div class="t" style="left:383px;top:449px"><span style="color:#61afef">2025</span><span style="color:#c678dd">−</span><span style="color:#61afef">03</span><span style="color:#c678dd">−</span><span style="color:#61afef">18</span><span style="color:#e8eaee"> </span><span style="color:#61afef">10</span><span style="color:#c9a9d6">:</span><span style="color:#61afef">38</span><span style="color:#c9a9d6">:</span><span style="color:#61afef">28</span><span style="color:#e8eaee">.</span><span style="color:#61afef">973</span><span style="color:#e8eaee"> [</span><span style="color:#56b8a6">info</span><span style="color:#e8eaee">] </span><span style="color:#a5c47f">Running</span><span style="color:#e8eaee"> </span><span style="color:#e8eef6">checks</span><span style="color:#e8eaee">...</span></div>
<div class="t" style="left:383px;top:464px"><span style="color:#61afef">2025</span><span style="color:#c678dd">−</span><span style="color:#61afef">03</span><span style="color:#c678dd">−</span><span style="color:#61afef">18</span><span style="color:#e8eaee"> </span><span style="color:#61afef">10</span><span style="color:#c9a9d6">:</span><span style="color:#61afef">38</span><span style="color:#c9a9d6">:</span><span style="color:#61afef">29</span><span style="color:#e8eaee">.</span><span style="color:#61afef">970</span><span style="color:#e8eaee"> [</span><span style="color:#56b8a6">info</span><span style="color:#e8eaee">] </span><span style="color:#c678dd">/</span><span style="color:#e3cc95">home</span><span style="color:#c678dd">/</span><span style="color:#e3cc95">lifailon</span><span style="color:#c678dd">/</span><span style="color:#e3cc95">lazyjournal&gt;Finished</span><span style="color:#e8eaee"> </span><span style="color:#a5c47f">running</span><span style="color:#e8eaee"> </span><span style="color:#e8eef6">tool</span><span style="color:#e8eaee">: </span><span style="color:#c678dd">/</span><span style="color:#e3cc95">root</span><span style="color:#c678dd">/</span><span style="color:#e3cc95">go</span><span style="color:#c678dd">/</span><span style="color:#e3cc95">bin</span><span style="color:#c678dd">/</span><span style="color:#e3cc95">staticcheck</span></div>
<div class="t" style="left:383px;top:479px"><span style="color:#61afef">2025</span><span style="color:#c678dd">−</span><span style="color:#61afef">03</span><span style="color:#c678dd">−</span><span style="color:#61afef">18</span><span style="color:#e8eaee"> </span><span style="color:#61afef">10</span><span style="color:#c9a9d6">:</span><span style="color:#61afef">38</span><span style="color:#c9a9d6">:</span><span style="color:#61afef">59</span><span style="color:#e8eaee">.</span><span style="color:#61afef">515</span><span style="color:#e8eaee"> [</span><span style="color:#56b8a6">info</span><span style="color:#e8eaee">] </span><span style="color:#a5c47f">Running</span><span style="color:#e8eaee"> </span><span style="color:#e8eef6">checks</span><span style="color:#e8eaee">...</span></div>
<div class="t" style="left:383px;top:494px"><span style="color:#61afef">2025</span><span style="color:#c678dd">−</span><span style="color:#61afef">03</span><span style="color:#c678dd">−</span><span style="color:#61afef">18</span><span style="color:#e8eaee"> </span><span style="color:#61afef">10</span><span style="color:#c9a9d6">:</span><span style="color:#61afef">39</span><span style="color:#c9a9d6">:</span><span style="color:#61afef">00</span><span style="color:#e8eaee">.</span><span style="color:#61afef">565</span><span style="color:#e8eaee"> [</span><span style="color:#56b8a6">info</span><span style="color:#e8eaee">] </span><span style="color:#c678dd">/</span><span style="color:#e3cc95">home</span><span style="color:#c678dd">/</span><span style="color:#e3cc95">lifailon</span><span style="color:#c678dd">/</span><span style="color:#e3cc95">lazyjournal&gt;Finished</span><span style="color:#e8eaee"> </span><span style="color:#a5c47f">running</span><span style="color:#e8eaee"> </span><span style="color:#e8eef6">tool</span><span style="color:#e8eaee">: </span><span style="color:#c678dd">/</span><span style="color:#e3cc95">root</span><span style="color:#c678dd">/</span><span style="color:#e3cc95">go</span><span style="color:#c678dd">/</span><span style="color:#e3cc95">bin</span><span style="color:#c678dd">/</span><span style="color:#e3cc95">staticcheck</span></div>
<div class="t" style="left:383px;top:509px"><span style="color:#61afef">2025</span><span style="color:#c678dd">−</span><span style="color:#61afef">03</span><span style="color:#c678dd">−</span><span style="color:#61afef">18</span><span style="color:#e8eaee"> </span><span style="color:#61afef">10</span><span style="color:#c9a9d6">:</span><span style="color:#61afef">39</span><span style="color:#c9a9d6">:</span><span style="color:#61afef">24</span><span style="color:#e8eaee">.</span><span style="color:#61afef">787</span><span style="color:#e8eaee"> [</span><span style="color:#56b8a6">info</span><span style="color:#e8eaee">] </span><span style="color:#a5c47f">Running</span><span style="color:#e8eaee"> </span><span style="color:#e8eef6">checks</span><span style="color:#e8eaee">...</span></div>
<div class="t" style="left:383px;top:524px"><span style="color:#61afef">2025</span><span style="color:#c678dd">−</span><span style="color:#61afef">03</span><span style="color:#c678dd">−</span><span style="color:#61afef">18</span><span style="color:#e8eaee"> </span><span style="color:#61afef">10</span><span style="color:#c9a9d6">:</span><span style="color:#61afef">39</span><span style="color:#c9a9d6">:</span><span style="color:#61afef">25</span><span style="color:#e8eaee">.</span><span style="color:#61afef">857</span><span style="color:#e8eaee"> [</span><span style="color:#56b8a6">info</span><span style="color:#e8eaee">] </span><span style="color:#c678dd">/</span><span style="color:#e3cc95">home</span><span style="color:#c678dd">/</span><span style="color:#e3cc95">lifailon</span><span style="color:#c678dd">/</span><span style="color:#e3cc95">lazyjournal&gt;Finished</span><span style="color:#e8eaee"> </span><span style="color:#a5c47f">running</span><span style="color:#e8eaee"> </span><span style="color:#e8eef6">tool</span><span style="color:#e8eaee">: </span><span style="color:#c678dd">/</span><span style="color:#e3cc95">root</span><span style="color:#c678dd">/</span><span style="color:#e3cc95">go</span><span style="color:#c678dd">/</span><span style="color:#e3cc95">bin</span><span style="color:#c678dd">/</span><span style="color:#e3cc95">staticcheck</span></div>
<div class="t" style="left:383px;top:539px"><span style="color:#61afef">2025</span><span style="color:#c678dd">−</span><span style="color:#61afef">03</span><span style="color:#c678dd">−</span><span style="color:#61afef">18</span><span style="color:#e8eaee"> </span><span style="color:#61afef">10</span><span style="color:#c9a9d6">:</span><span style="color:#61afef">39</span><span style="color:#c9a9d6">:</span><span style="color:#61afef">42</span><span style="color:#e8eaee">.</span><span style="color:#61afef">362</span><span style="color:#e8eaee"> [</span><span style="color:#56b8a6">info</span><span style="color:#e8eaee">] </span><span style="color:#a5c47f">Running</span><span style="color:#e8eaee"> </span><span style="color:#e8eef6">checks</span><span style="color:#e8eaee">...</span></div>
<div class="t" style="left:383px;top:554px"><span style="color:#61afef">2025</span><span style="color:#c678dd">−</span><span style="color:#61afef">03</span><span style="color:#c678dd">−</span><span style="color:#61afef">18</span><span style="color:#e8eaee"> </span><span style="color:#61afef">10</span><span style="color:#c9a9d6">:</span><span style="color:#61afef">39</span><span style="color:#c9a9d6">:</span><span style="color:#61afef">43</span><span style="color:#e8eaee">.</span><span style="color:#61afef">460</span><span style="color:#e8eaee"> [</span><span style="color:#56b8a6">info</span><span style="color:#e8eaee">] </span><span style="color:#c678dd">/</span><span style="color:#e3cc95">home</span><span style="color:#c678dd">/</span><span style="color:#e3cc95">lifailon</span><span style="color:#c678dd">/</span><span style="color:#e3cc95">lazyjournal&gt;Finished</span><span style="color:#e8eaee"> </span><span style="color:#a5c47f">running</span><span style="color:#e8eaee"> </span><span style="color:#e8eef6">tool</span><span style="color:#e8eaee">: </span><span style="color:#c678dd">/</span><span style="color:#e3cc95">root</span><span style="color:#c678dd">/</span><span style="color:#e3cc95">go</span><span style="color:#c678dd">/</span><span style="color:#e3cc95">bin</span><span style="color:#c678dd">/</span><span style="color:#e3cc95">staticcheck</span></div>
<div class="t" style="left:383px;top:569px"><span style="color:#61afef">2025</span><span style="color:#c678dd">−</span><span style="color:#61afef">03</span><span style="color:#c678dd">−</span><span style="color:#61afef">18</span><span style="color:#e8eaee"> </span><span style="color:#61afef">10</span><span style="color:#c9a9d6">:</span><span style="color:#61afef">40</span><span style="color:#c9a9d6">:</span><span style="color:#61afef">37</span><span style="color:#e8eaee">.</span><span style="color:#61afef">222</span><span style="color:#e8eaee"> [</span><span style="color:#56b8a6">info</span><span style="color:#e8eaee">] </span><span style="color:#a5c47f">Running</span><span style="color:#e8eaee"> </span><span style="color:#e8eef6">checks</span><span style="color:#e8eaee">...</span></div>
<div class="t" style="left:383px;top:584px"><span style="color:#61afef">2025</span><span style="color:#c678dd">−</span><span style="color:#61afef">03</span><span style="color:#c678dd">−</span><span style="color:#61afef">18</span><span style="color:#e8eaee"> </span><span style="color:#61afef">10</span><span style="color:#c9a9d6">:</span><span style="color:#61afef">40</span><span style="color:#c9a9d6">:</span><span style="color:#61afef">38</span><span style="color:#e8eaee">.</span><span style="color:#61afef">370</span><span style="color:#e8eaee"> [</span><span style="color:#56b8a6">info</span><span style="color:#e8eaee">] </span><span style="color:#c678dd">/</span><span style="color:#e3cc95">home</span><span style="color:#c678dd">/</span><span style="color:#e3cc95">lifailon</span><span style="color:#c678dd">/</span><span style="color:#e3cc95">lazyjournal&gt;Finished</span><span style="color:#e8eaee"> </span><span style="color:#a5c47f">running</span><span style="color:#e8eaee"> </span><span style="color:#e8eef6">tool</span><span style="color:#e8eaee">: </span><span style="color:#c678dd">/</span><span style="color:#e3cc95">root</span><span style="color:#c678dd">/</span><span style="color:#e3cc95">go</span><span style="color:#c678dd">/</span><span style="color:#e3cc95">bin</span><span style="color:#c678dd">/</span><span style="color:#e3cc95">staticcheck</span></div>
<div class="t" style="left:383px;top:599px"><span style="color:#61afef">2025</span><span style="color:#c678dd">−</span><span style="color:#61afef">03</span><span style="color:#c678dd">−</span><span style="color:#61afef">18</span><span style="color:#e8eaee"> </span><span style="color:#61afef">10</span><span style="color:#c9a9d6">:</span><span style="color:#61afef">40</span><span style="color:#c9a9d6">:</span><span style="color:#61afef">48</span><span style="color:#e8eaee">.</span><span style="color:#61afef">718</span><span style="color:#e8eaee"> [</span><span style="color:#56b8a6">info</span><span style="color:#e8eaee">] </span><span style="color:#a5c47f">Running</span><span style="color:#e8eaee"> </span><span style="color:#e8eef6">checks</span><span style="color:#e8eaee">...</span></div>
<div class="t" style="left:383px;top:614px"><span style="color:#61afef">2025</span><span style="color:#c678dd">−</span><span style="color:#61afef">03</span><span style="color:#c678dd">−</span><span style="color:#61afef">18</span><span style="color:#e8eaee"> </span><span style="color:#61afef">10</span><span style="color:#c9a9d6">:</span><span style="color:#61afef">40</span><span style="color:#c9a9d6">:</span><span style="color:#61afef">49</span><span style="color:#e8eaee">.</span><span style="color:#61afef">867</span><span style="color:#e8eaee"> [</span><span style="color:#56b8a6">info</span><span style="color:#e8eaee">] </span><span style="color:#c678dd">/</span><span style="color:#e3cc95">home</span><span style="color:#c678dd">/</span><span style="color:#e3cc95">lifailon</span><span style="color:#c678dd">/</span><span style="color:#e3cc95">lazyjournal&gt;Finished</span><span style="color:#e8eaee"> </span><span style="color:#a5c47f">running</span><span style="color:#e8eaee"> </span><span style="color:#e8eef6">tool</span><span style="color:#e8eaee">: </span><span style="color:#c678dd">/</span><span style="color:#e3cc95">root</span><span style="color:#c678dd">/</span><span style="color:#e3cc95">go</span><span style="color:#c678dd">/</span><span style="color:#e3cc95">bin</span><span style="color:#c678dd">/</span><span style="color:#e3cc95">staticcheck</span></div>
<div class="t" style="left:383px;top:629px"><span style="color:#61afef">2025</span><span style="color:#c678dd">−</span><span style="color:#61afef">03</span><span style="color:#c678dd">−</span><span style="color:#61afef">18</span><span style="color:#e8eaee"> </span><span style="color:#61afef">10</span><span style="color:#c9a9d6">:</span><span style="color:#61afef">41</span><span style="color:#c9a9d6">:</span><span style="color:#61afef">03</span><span style="color:#e8eaee">.</span><span style="color:#61afef">883</span><span style="color:#e8eaee"> [</span><span style="color:#56b8a6">info</span><span style="color:#e8eaee">] </span><span style="color:#a5c47f">Running</span><span style="color:#e8eaee"> </span><span style="color:#e8eef6">checks</span><span style="color:#e8eaee">...</span></div>
<div class="t" style="left:383px;top:644px"><span style="color:#61afef">2025</span><span style="color:#c678dd">−</span><span style="color:#61afef">03</span><span style="color:#c678dd">−</span><span style="color:#61afef">18</span><span style="color:#e8eaee"> </span><span style="color:#61afef">10</span><span style="color:#c9a9d6">:</span><span style="color:#61afef">41</span><span style="color:#c9a9d6">:</span><span style="color:#61afef">04</span><span style="color:#e8eaee">.</span><span style="color:#61afef">854</span><span style="color:#e8eaee"> [</span><span style="color:#56b8a6">info</span><span style="color:#e8eaee">] </span><span style="color:#c678dd">/</span><span style="color:#e3cc95">home</span><span style="color:#c678dd">/</span><span style="color:#e3cc95">lifailon</span><span style="color:#c678dd">/</span><span style="color:#e3cc95">lazyjournal&gt;Finished</span><span style="color:#e8eaee"> </span><span style="color:#a5c47f">running</span><span style="color:#e8eaee"> </span><span style="color:#e8eef6">tool</span><span style="color:#e8eaee">: </span><span style="color:#c678dd">/</span><span style="color:#e3cc95">root</span><span style="color:#c678dd">/</span><span style="color:#e3cc95">go</span><span style="color:#c678dd">/</span><span style="color:#e3cc95">bin</span><span style="color:#c678dd">/</span><span style="color:#e3cc95">staticcheck</span></div>
<div class="t" style="left:383px;top:659px"><span style="color:#61afef">2025</span><span style="color:#c678dd">−</span><span style="color:#61afef">03</span><span style="color:#c678dd">−</span><span style="color:#61afef">18</span><span style="color:#e8eaee"> </span><span style="color:#61afef">10</span><span style="color:#c9a9d6">:</span><span style="color:#61afef">41</span><span style="color:#c9a9d6">:</span><span style="color:#61afef">13</span><span style="color:#e8eaee">.</span><span style="color:#61afef">841</span><span style="color:#e8eaee"> [</span><span style="color:#56b8a6">info</span><span style="color:#e8eaee">] </span><span style="color:#a5c47f">Running</span><span style="color:#e8eaee"> </span><span style="color:#e8eef6">checks</span><span style="color:#e8eaee">...</span></div>
<div class="t" style="left:383px;top:674px"><span style="color:#61afef">2025</span><span style="color:#c678dd">−</span><span style="color:#61afef">03</span><span style="color:#c678dd">−</span><span style="color:#61afef">18</span><span style="color:#e8eaee"> </span><span style="color:#61afef">10</span><span style="color:#c9a9d6">:</span><span style="color:#61afef">41</span><span style="color:#c9a9d6">:</span><span style="color:#61afef">14</span><span style="color:#e8eaee">.</span><span style="color:#61afef">181</span><span style="color:#e8eaee"> [</span><span style="color:#56b8a6">info</span><span style="color:#e8eaee">] </span><span style="color:#c678dd">/</span><span style="color:#e3cc95">home</span><span style="color:#c678dd">/</span><span style="color:#e3cc95">lifailon</span><span style="color:#c678dd">/</span><span style="color:#e3cc95">lazyjournal&gt;Finished</span><span style="color:#e8eaee"> </span><span style="color:#a5c47f">running</span><span style="color:#e8eaee"> </span><span style="color:#e8eef6">tool</span><span style="color:#e8eaee">: </span><span style="color:#c678dd">/</span><span style="color:#e3cc95">root</span><span style="color:#c678dd">/</span><span style="color:#e3cc95">go</span><span style="color:#c678dd">/</span><span style="color:#e3cc95">bin</span><span style="color:#c678dd">/</span><span style="color:#e3cc95">staticcheck</span></div>
<div class="t" style="left:383px;top:689px"><span style="color:#61afef">2025</span><span style="color:#c678dd">−</span><span style="color:#61afef">03</span><span style="color:#c678dd">−</span><span style="color:#61afef">18</span><span style="color:#e8eaee"> </span><span style="color:#61afef">10</span><span style="color:#c9a9d6">:</span><span style="color:#61afef">41</span><span style="color:#c9a9d6">:</span><span style="color:#61afef">56</span><span style="color:#e8eaee">.</span><span style="color:#61afef">614</span><span style="color:#e8eaee"> [</span><span style="color:#56b8a6">info</span><span style="color:#e8eaee">] </span><span style="color:#a5c47f">Running</span><span style="color:#e8eaee"> </span><span style="color:#e8eef6">checks</span><span style="color:#e8eaee">...</span></div>
<div class="t" style="left:383px;top:704px"><span style="color:#61afef">2025</span><span style="color:#c678dd">−</span><span style="color:#61afef">03</span><span style="color:#c678dd">−</span><span style="color:#61afef">18</span><span style="color:#e8eaee"> </span><span style="color:#61afef">10</span><span style="color:#c9a9d6">:</span><span style="color:#61afef">41</span><span style="color:#c9a9d6">:</span><span style="color:#61afef">56</span><span style="color:#e8eaee">.</span><span style="color:#61afef">942</span><span style="color:#e8eaee"> [</span><span style="color:#56b8a6">info</span><span style="color:#e8eaee">] </span><span style="color:#c678dd">/</span><span style="color:#e3cc95">home</span><span style="color:#c678dd">/</span><span style="color:#e3cc95">lifailon</span><span style="color:#c678dd">/</span><span style="color:#e3cc95">lazyjournal&gt;Finished</span><span style="color:#e8eaee"> </span><span style="color:#a5c47f">running</span><span style="color:#e8eaee"> </span><span style="color:#e8eef6">tool</span><span style="color:#e8eaee">: </span><span style="color:#c678dd">/</span><span style="color:#e3cc95">root</span><span style="color:#c678dd">/</span><span style="color:#e3cc95">go</span><span style="color:#c678dd">/</span><span style="color:#e3cc95">bin</span><span style="color:#c678dd">/</span><span style="color:#e3cc95">staticcheck</span></div>
<div class="t" style="left:383px;top:719px"><span style="color:#61afef">2025</span><span style="color:#c678dd">−</span><span style="color:#61afef">03</span><span style="color:#c678dd">−</span><span style="color:#61afef">18</span><span style="color:#e8eaee"> </span><span style="color:#61afef">10</span><span style="color:#c9a9d6">:</span><span style="color:#61afef">42</span><span style="color:#c9a9d6">:</span><span style="color:#61afef">29</span><span style="color:#e8eaee">.</span><span style="color:#61afef">142</span><span style="color:#e8eaee"> [</span><span style="color:#56b8a6">info</span><span style="color:#e8eaee">] </span><span style="color:#a5c47f">Running</span><span style="color:#e8eaee"> </span><span style="color:#e8eef6">checks</span><span style="color:#e8eaee">...</span></div>
<div class="t" style="left:383px;top:734px"><span style="color:#61afef">2025</span><span style="color:#c678dd">−</span><span style="color:#61afef">03</span><span style="color:#c678dd">−</span><span style="color:#61afef">18</span><span style="color:#e8eaee"> </span><span style="color:#61afef">10</span><span style="color:#c9a9d6">:</span><span style="color:#61afef">42</span><span style="color:#c9a9d6">:</span><span style="color:#61afef">30</span><span style="color:#e8eaee">.</span><span style="color:#61afef">168</span><span style="color:#e8eaee"> [</span><span style="color:#56b8a6">info</span><span style="color:#e8eaee">] </span><span style="color:#c678dd">/</span><span style="color:#e3cc95">home</span><span style="color:#c678dd">/</span><span style="color:#e3cc95">lifailon</span><span style="color:#c678dd">/</span><span style="color:#e3cc95">lazyjournal&gt;Finished</span><span style="color:#e8eaee"> </span><span style="color:#a5c47f">running</span><span style="color:#e8eaee"> </span><span style="color:#e8eef6">tool</span><span style="color:#e8eaee">: </span><span style="color:#c678dd">/</span><span style="color:#e3cc95">root</span><span style="color:#c678dd">/</span><span style="color:#e3cc95">go</span><span style="color:#c678dd">/</span><span style="color:#e3cc95">bin</span><span style="color:#c678dd">/</span><span style="color:#e3cc95">staticcheck</span></div>
<div class="t" style="left:383px;top:749px"><span style="color:#61afef">2025</span><span style="color:#c678dd">−</span><span style="color:#61afef">03</span><span style="color:#c678dd">−</span><span style="color:#61afef">18</span><span style="color:#e8eaee"> </span><span style="color:#61afef">10</span><span style="color:#c9a9d6">:</span><span style="color:#61afef">44</span><span style="color:#c9a9d6">:</span><span style="color:#61afef">02</span><span style="color:#e8eaee">.</span><span style="color:#61afef">518</span><span style="color:#e8eaee"> [</span><span style="color:#56b8a6">info</span><span style="color:#e8eaee">] </span><span style="color:#a5c47f">Running</span><span style="color:#e8eaee"> </span><span style="color:#e8eef6">checks</span><span style="color:#e8eaee">...</span></div>
<div class="t" style="left:383px;top:764px"><span style="color:#61afef">2025</span><span style="color:#c678dd">−</span><span style="color:#61afef">03</span><span style="color:#c678dd">−</span><span style="color:#61afef">18</span><span style="color:#e8eaee"> </span><span style="color:#61afef">10</span><span style="color:#c9a9d6">:</span><span style="color:#61afef">44</span><span style="color:#c9a9d6">:</span><span style="color:#61afef">03</span><span style="color:#e8eaee">.</span><span style="color:#61afef">533</span><span style="color:#e8eaee"> [</span><span style="color:#56b8a6">info</span><span style="color:#e8eaee">] </span><span style="color:#c678dd">/</span><span style="color:#e3cc95">home</span><span style="color:#c678dd">/</span><span style="color:#e3cc95">lifailon</span><span style="color:#c678dd">/</span><span style="color:#e3cc95">lazyjournal&gt;Finished</span><span style="color:#e8eaee"> </span><span style="color:#a5c47f">running</span><span style="color:#e8eaee"> </span><span style="color:#e8eef6">tool</span><span style="color:#e8eaee">: </span><span style="color:#c678dd">/</span><span style="color:#e3cc95">root</span><span style="color:#c678dd">/</span><span style="color:#e3cc95">go</span><span style="color:#c678dd">/</span><span style="color:#e3cc95">bin</span><span style="color:#c678dd">/</span><span style="color:#e3cc95">staticcheck</span></div>
<div class="t" style="left:383px;top:779px"><span style="color:#61afef">2025</span><span style="color:#c678dd">−</span><span style="color:#61afef">03</span><span style="color:#c678dd">−</span><span style="color:#61afef">18</span><span style="color:#e8eaee"> </span><span style="color:#61afef">10</span><span style="color:#c9a9d6">:</span><span style="color:#61afef">44</span><span style="color:#c9a9d6">:</span><span style="color:#61afef">14</span><span style="color:#e8eaee">.</span><span style="color:#61afef">880</span><span style="color:#e8eaee"> [</span><span style="color:#56b8a6">info</span><span style="color:#e8eaee">] </span><span style="color:#a5c47f">Running</span><span style="color:#e8eaee"> </span><span style="color:#e8eef6">checks</span><span style="color:#e8eaee">...</span></div>
<div class="t" style="left:383px;top:794px"><span style="color:#61afef">2025</span><span style="color:#c678dd">−</span><span style="color:#61afef">03</span><span style="color:#c678dd">−</span><span style="color:#61afef">18</span><span style="color:#e8eaee"> </span><span style="color:#61afef">10</span><span style="color:#c9a9d6">:</span><span style="color:#61afef">44</span><span style="color:#c9a9d6">:</span><span style="color:#61afef">15</span><span style="color:#e8eaee">.</span><span style="color:#61afef">921</span><span style="color:#e8eaee"> [</span><span style="color:#56b8a6">info</span><span style="color:#e8eaee">] </span><span style="color:#c678dd">/</span><span style="color:#e3cc95">home</span><span style="color:#c678dd">/</span><span style="color:#e3cc95">lifailon</span><span style="color:#c678dd">/</span><span style="color:#e3cc95">lazyjournal&gt;Finished</span><span style="color:#e8eaee"> </span><span style="color:#a5c47f">running</span><span style="color:#e8eaee"> </span><span style="color:#e8eef6">tool</span><span style="color:#e8eaee">: </span><span style="color:#c678dd">/</span><span style="color:#e3cc95">root</span><span style="color:#c678dd">/</span><span style="color:#e3cc95">go</span><span style="color:#c678dd">/</span><span style="color:#e3cc95">bin</span><span style="color:#c678dd">/</span><span style="color:#e3cc95">staticcheck</span></div>
<div class="t" style="left:383px;top:809px"><span style="color:#61afef">2025</span><span style="color:#c678dd">−</span><span style="color:#61afef">03</span><span style="color:#c678dd">−</span><span style="color:#61afef">18</span><span style="color:#e8eaee"> </span><span style="color:#61afef">10</span><span style="color:#c9a9d6">:</span><span style="color:#61afef">51</span><span style="color:#c9a9d6">:</span><span style="color:#61afef">10</span><span style="color:#e8eaee">.</span><span style="color:#61afef">339</span><span style="color:#e8eaee"> [</span><span style="color:#56b8a6">info</span><span style="color:#e8eaee">] </span><span style="color:#a5c47f">Running</span><span style="color:#e8eaee"> </span><span style="color:#e8eef6">checks</span><span style="color:#e8eaee">...</span></div>
<div class="t" style="left:383px;top:824px"><span style="color:#61afef">2025</span><span style="color:#c678dd">−</span><span style="color:#61afef">03</span><span style="color:#c678dd">−</span><span style="color:#61afef">18</span><span style="color:#e8eaee"> </span><span style="color:#61afef">10</span><span style="color:#c9a9d6">:</span><span style="color:#61afef">51</span><span style="color:#c9a9d6">:</span><span style="color:#61afef">10</span><span style="color:#e8eaee">.</span><span style="color:#61afef">681</span><span style="color:#e8eaee"> [</span><span style="color:#56b8a6">info</span><span style="color:#e8eaee">] </span><span style="color:#c678dd">/</span><span style="color:#e3cc95">home</span><span style="color:#c678dd">/</span><span style="color:#e3cc95">lifailon</span><span style="color:#c678dd">/</span><span style="color:#e3cc95">lazyjournal&gt;Finished</span><span style="color:#e8eaee"> </span><span style="color:#a5c47f">running</span><span style="color:#e8eaee"> </span><span style="color:#e8eef6">tool</span><span style="color:#e8eaee">: </span><span style="color:#c678dd">/</span><span style="color:#e3cc95">root</span><span style="color:#c678dd">/</span><span style="color:#e3cc95">go</span><span style="color:#c678dd">/</span><span style="color:#e3cc95">bin</span><span style="color:#c678dd">/</span><span style="color:#e3cc95">staticcheck</span></div>
<div class="t" style="left:383px;top:839px"><span style="color:#61afef">2025</span><span style="color:#c678dd">−</span><span style="color:#61afef">03</span><span style="color:#c678dd">−</span><span style="color:#61afef">18</span><span style="color:#e8eaee"> </span><span style="color:#61afef">10</span><span style="color:#c9a9d6">:</span><span style="color:#61afef">51</span><span style="color:#c9a9d6">:</span><span style="color:#61afef">36</span><span style="color:#e8eaee">.</span><span style="color:#61afef">542</span><span style="color:#e8eaee"> [</span><span style="color:#56b8a6">info</span><span style="color:#e8eaee">] </span><span style="color:#a5c47f">Running</span><span style="color:#e8eaee"> </span><span style="color:#e8eef6">checks</span><span style="color:#e8eaee">...</span></div></div>
</body></html>
